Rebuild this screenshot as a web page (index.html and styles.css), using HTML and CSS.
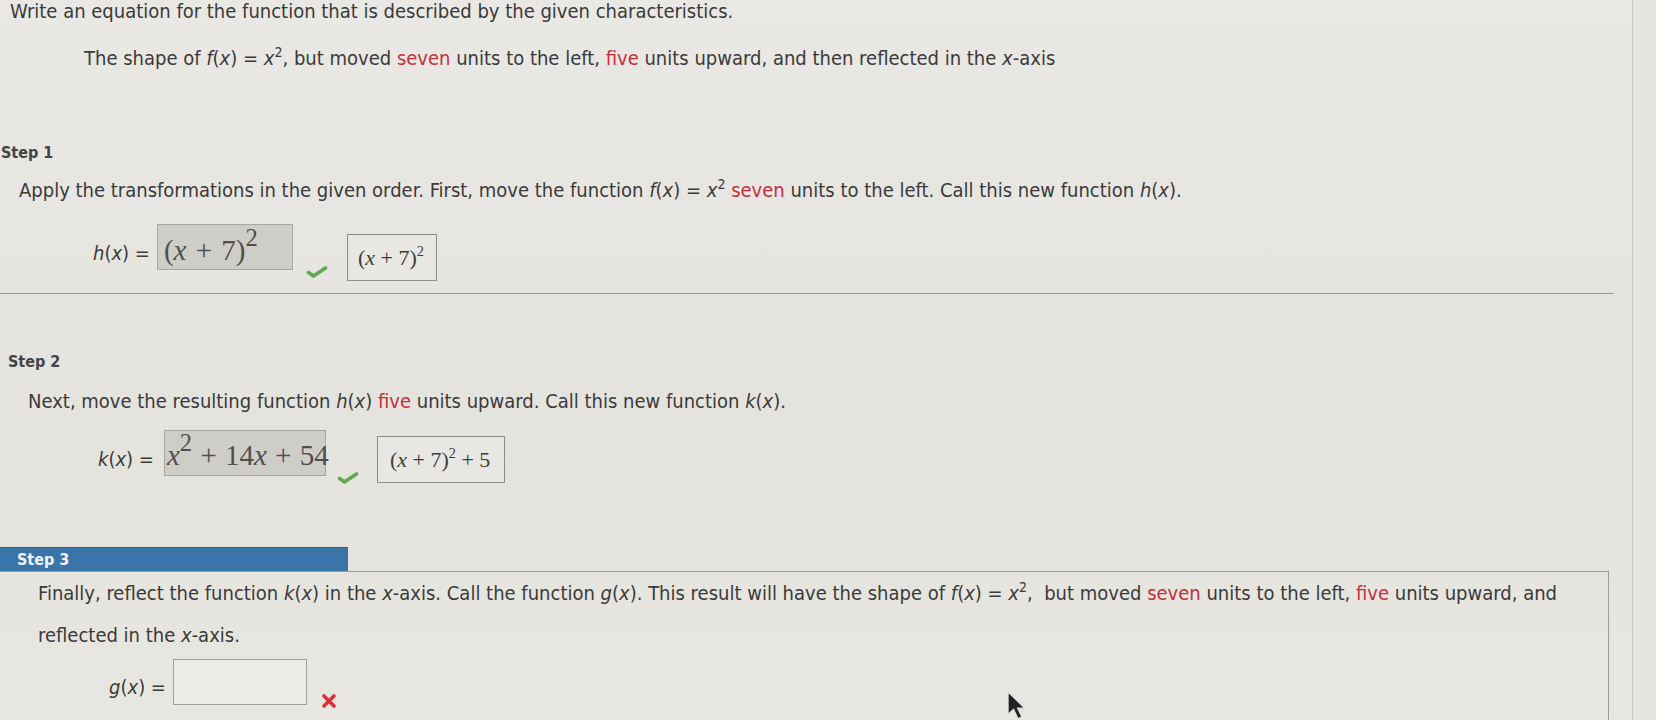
FILE: index.html
```html
<!DOCTYPE html>
<html lang="en">
<head>
<meta charset="utf-8">
<title>Step-by-step</title>
<link rel="stylesheet" href="styles.css">
</head>
<body>
<div class="frame">
  <p class="title">Write an equation for the function that is described by the given characteristics.</p>
  <p class="desc">The shape of <i>f</i>(<i>x</i>) = <i>x</i><sup>2</sup>, but moved <span class="red">seven</span> units to the left, <span class="red">five</span> units upward, and then reflected in the <i>x</i>-axis</p>

  <section class="step step1">
    <h3 class="step-head">Step 1</h3>
    <p class="step-text">Apply the transformations in the given order. First, move the function <i>f</i>(<i>x</i>) = <i>x</i><sup>2</sup> <span class="red">seven</span> units to the left. Call this new function <i>h</i>(<i>x</i>).</p>
    <div class="answer-row">
      <span class="label"><i>h</i>(<i>x</i>) =</span>
      <span class="ans-box w1"><span class="m">(<i>x</i> + 7)<sup>2</sup></span></span>
      <svg class="mark check" viewBox="0 0 22 12" width="22" height="12"><path d="M2.5 6.5 L7.5 10 L19.5 2" fill="none" stroke="#5fa84e" stroke-width="3.6" stroke-linecap="round" stroke-linejoin="round"/></svg>
      <span class="preview"><span class="pm">(<i>x</i> + 7)<sup>2</sup></span></span>
    </div>
  </section>

  <hr class="sep">

  <section class="step step2">
    <h3 class="step-head">Step 2</h3>
    <p class="step-text">Next, move the resulting function <i>h</i>(<i>x</i>) <span class="red">five</span> units upward. Call this new function <i>k</i>(<i>x</i>).</p>
    <div class="answer-row">
      <span class="label"><i>k</i>(<i>x</i>) =</span>
      <span class="ans-box w2"><span class="m"><i>x</i><sup>2</sup> + 14<i>x</i> + 54</span></span>
      <svg class="mark check" viewBox="0 0 22 12" width="22" height="12"><path d="M2.5 6.5 L7.5 10 L19.5 2" fill="none" stroke="#5fa84e" stroke-width="3.6" stroke-linecap="round" stroke-linejoin="round"/></svg>
      <span class="preview wide"><span class="pm">(<i>x</i> + 7)<sup>2</sup> + 5</span></span>
    </div>
  </section>

  <section class="step3">
    <div class="tab"><span>Step 3</span></div>
    <div class="box3">
      <p class="step3-text"><span>Finally, reflect the function <i>k</i>(<i>x</i>) in the <i>x</i>-axis. Call the function <i>g</i>(<i>x</i>). This result will have the shape of <i>f</i>(<i>x</i>) = <i>x</i><sup>2</sup>, &nbsp;but moved <span class="red">seven</span> units to the left, <span class="red">five</span> units upward, and</span> <span>reflected in the <i>x</i>-axis.</span></p>
      <div class="answer-row row3">
        <span class="label"><i>g</i>(<i>x</i>) =</span>
        <span class="empty-box"></span>
        <svg class="mark cross" viewBox="0 0 16 16" width="16" height="16"><path d="M3 3 L13 13 M13 3 L3 13" fill="none" stroke="#d8323c" stroke-width="3.6" stroke-linecap="round"/></svg>
      </div>
    </div>
  </section>

  <svg class="cursor" viewBox="0 0 20 28" width="22" height="31"><path d="M1 1 L1 21 L6 16.5 L10 25 L13.5 23.5 L9.5 15.5 L16 15.5 Z" fill="#222" stroke="#ddd" stroke-width="1"/></svg>
</div>
</body>
</html>
```

FILE: styles.css
```css
html, body {
  margin: 0;
  padding: 0;
}
body {
  background: #e6e4df;
  color: #3a3a3a;
  font-family: "DejaVu Sans Condensed", "DejaVu Sans", sans-serif;
  font-stretch: condensed;
  font-size: 20px;
  line-height: 22px;
  overflow: hidden;
}
.frame {
  position: relative;
  width: 1632px;
  height: 720px;
  border-right: 1px solid #c9c7c2;
  background: linear-gradient(180deg, #eae8e4 0%, #e5e3de 60%, #e8e6e1 100%);
}
p { margin: 0; }
sup {
  font-size: 0.7em;
  line-height: 0;
  vertical-align: 0.55em;
}
.red { color: #c5303a; }
.title {
  padding: 0 0 0 10px;
}
.desc {
  margin-top: 25px;
  padding-left: 84px;
}
.step-head {
  margin: 0;
  font-size: 16px;
  line-height: 20px;
  font-weight: bold;
  color: #444;
}
.step1 { margin-top: 74px; }
.step1 .step-head { padding-left: 1px; }
.step1 .step-text { margin-top: 16px; padding-left: 19px; }
.step1 .answer-row { margin-top: 23px; padding-left: 93px; }

.answer-row {
  display: flex;
  align-items: flex-start;
}
.label {
  margin-top: 18px;
  margin-right: 7px;
  white-space: nowrap;
}
.ans-box {
  display: flex;
  align-items: center;
  height: 44px;
  padding: 0 6px 0 6px;
  background: #cfcdc8;
  border: 1px solid #a9a7a2;
  font-family: "Liberation Serif", "DejaVu Serif", serif;
  font-stretch: normal;
  color: #4f4f4f;
  font-size: 29px;
  box-sizing: content-box;
}
.ans-box .m { white-space: nowrap; margin-top: 4px; }
.ans-box sup { font-size: 0.85em; vertical-align: 0.55em; }
.w1 { width: 122px; }
.w1 .m { word-spacing: 2px; }
.w2 { width: 154px; padding-left: 2px; padding-right: 4px; margin-left: 3px; }
.w2 .m { margin-top: 2px; word-spacing: 1px; }
.mark { flex: none; }
.check { margin: 42px 19px 0 13px; }
.preview {
  display: flex;
  align-items: center;
  margin-top: 10px;
  height: 45px;
  padding: 0 12px 0 10px;
  border: 1px solid #8f8d88;
  background: #e9e7e3;
  font-family: "Liberation Serif", "DejaVu Serif", serif;
  font-stretch: normal;
  font-size: 22px;
  color: #3c3c3c;
  white-space: nowrap;
}
.preview sup { font-size: 0.65em; vertical-align: 0.6em; }
.preview.wide { padding: 0 14px 0 12px; }

.sep {
  margin: 12px 0 0 0;
  width: 1614px;
  border: 0;
  border-top: 1px solid #9c9a96;
  height: 0;
}

.step2 { margin-top: 58px; }
.step2 .step-head { padding-left: 8px; }
.step2 .step-text { margin-top: 18px; padding-left: 28px; }
.step2 .answer-row { margin-top: 18px; padding-left: 98px; }
.step2 .preview { margin-top: 6px; }
.step2 .check { margin-left: 11px; margin-right: 18px; }

.step3 { margin-top: 63px; }
.tab {
  width: 348px;
  height: 24px;
  background: #3a75aa;
  border-top: 1px solid #2c5f8f;
  color: #f2f2f2;
  font-size: 16px;
  font-weight: bold;
  line-height: 24px;
}
.tab span { padding-left: 17px; }
.box3 {
  width: 1609px;
  height: 200px;
  border-top: 1px solid #9d9b97;
  border-right: 1px solid #9d9b97;
  margin-top: -1px;
  box-sizing: border-box;
  padding: 0 20px 0 38px;
}
.step3-text {
  line-height: 42px;
}
.row3 { margin-top: 3px; padding-left: 71px; }
.row3 .label { margin-top: 17px; }
.empty-box {
  width: 132px;
  height: 44px;
  border: 1px solid #a3a19c;
  background: #ecebe7;
}
.cross { margin: 34px 0 0 14px; }

.cursor {
  position: absolute;
  left: 1007px;
  top: 691px;
}
```
